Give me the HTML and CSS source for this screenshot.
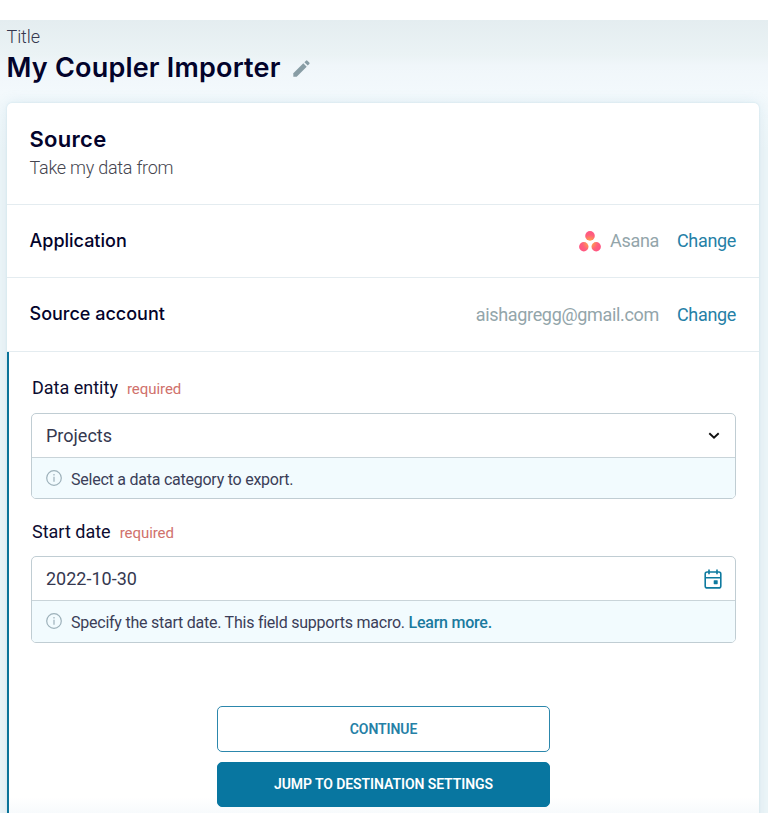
FILE: index.html
```html
<!DOCTYPE html>
<html lang="en">
<head>
    <meta charset="UTF-8">
    <meta name="viewport" content="width=device-width, initial-scale=1.0">
    <title>My Coupler Importer</title>
    <link rel="stylesheet" href="styles.css">
</head>
<body>
    <main class="page">
        <header class="page-header">
            <div class="page-label">Title</div>
            <div class="title-row">
                <h1>My Coupler Importer</h1>
                <svg class="icon-edit" width="17" height="17" viewBox="0 0 17 17">
                    <path d="M0.3 16.7V13.3L10.3 3.3L13.7 6.7L3.7 16.7Z"/>
                    <path d="M11.4 2.3L13 0.7Q13.7 0 14.4 0.7L16.3 2.6Q17 3.3 16.3 4L14.7 5.6Z"/>
                </svg>
            </div>
        </header>

        <section class="card">
            <div class="card-header">
                <h2>Source</h2>
                <p>Take my data from</p>
            </div>

            <div class="row">
                <h3>Application</h3>
                <div class="row-value">
                    <svg class="icon-asana" width="22" height="21" viewBox="0 0 22 21">
                        <defs>
                            <radialGradient id="asana" cx="11" cy="11.5" r="12" gradientUnits="userSpaceOnUse">
                                <stop offset="0" stop-color="#ffb047"/>
                                <stop offset="0.3" stop-color="#ff8f58"/>
                                <stop offset="0.65" stop-color="#ff5f7d"/>
                                <stop offset="1" stop-color="#ff5483"/>
                            </radialGradient>
                        </defs>
                        <g fill="url(#asana)">
                            <circle cx="11" cy="4.9" r="4.8"/>
                            <circle cx="4.8" cy="15.8" r="4.7"/>
                            <circle cx="17.2" cy="15.8" r="4.7"/>
                        </g>
                    </svg>
                    <span class="value">Asana</span>
                    <a class="change">Change</a>
                </div>
            </div>

            <div class="row">
                <h3>Source account</h3>
                <div class="row-value">
                    <span class="value">aishagregg@gmail.com</span>
                    <a class="change">Change</a>
                </div>
            </div>

            <div class="card-body">
                <div class="label">Data entity <em>required</em></div>
                <div class="field field-select">
                    <div class="control">
                        <span>Projects</span>
                        <svg class="icon-chevron" width="12" height="8" viewBox="0 0 12 8">
                            <path d="M1.3 1.3L6 5.8L10.7 1.3"/>
                        </svg>
                    </div>
                    <div class="hint">
                        <svg class="icon-info" width="16" height="16" viewBox="0 0 16 16">
                            <circle cx="8" cy="8" r="7.3"/>
                            <path d="M8 6.8V11.8M8 4V5.4"/>
                        </svg>
                        <span>Select a data category to export.</span>
                    </div>
                </div>

                <div class="label">Start date <em>required</em></div>
                <div class="field field-date">
                    <div class="control">
                        <span>2022-10-30</span>
                        <svg class="icon-calendar" width="18" height="20" viewBox="0 0 18 20">
                            <rect x="1.2" y="3" width="15.6" height="15.9" rx="2"/>
                            <path d="M1.2 8.8H16.8M5 0.6V5.2M13 0.6V5.2"/>
                            <rect class="dot" x="9.7" y="11.2" width="4" height="4" rx="0.6"/>
                        </svg>
                    </div>
                    <div class="hint">
                        <svg class="icon-info" width="16" height="16" viewBox="0 0 16 16">
                            <circle cx="8" cy="8" r="7.3"/>
                            <path d="M8 6.8V11.8M8 4V5.4"/>
                        </svg>
                        <span>Specify the start date. This field supports macro. <a>Learn more.</a></span>
                    </div>
                </div>

                <div class="actions">
                    <button class="btn btn-outline">Continue</button>
                    <button class="btn btn-primary">Jump to destination settings</button>
                </div>
            </div>
        </section>
    </main>
</body>
</html>
```
FILE: styles.css
```css
* {
    box-sizing: border-box;
}
body {
    margin: 0;
    height: 813px;
    overflow: hidden;
    font-family: Roboto, "Liberation Sans", sans-serif;
    font-size: 18px;
    color: #35384f;
    background: #fff;
}
h1, h2, h3, p {
    margin: 0;
    color: #03032b;
    font-family: Inter, "Liberation Sans", sans-serif;
}
.page {
    margin-top: 20px;
    height: 793px;
    padding: 0 9px 0 6.5px;
    background: linear-gradient(#e4edf0 0, #ebf3f5 36px, #f0f6fa 46px, #f3f9fc 72px, #edf5f8 130px, #edf5f8 100%);
}
.page-header {
    height: 82.5px;
    padding-top: 5px;
}
.page-label {
    line-height: 24px;
    font-weight: 300;
    letter-spacing: -0.1px;
}
.title-row {
    display: flex;
    align-items: center;
    height: 38px;
    gap: 12.5px;
}
h1 {
    font-size: 27px;
    line-height: 38px;
    font-weight: 600;
    letter-spacing: 0.2px;
    white-space: nowrap;
}
.icon-edit {
    fill: #889da5;
    margin-top: 1px;
}
.card {
    height: 740px;
    background: #fff;
    border-radius: 5px;
    box-shadow: 0 0 2px #c5dfe9, 0 0 14px rgba(140, 190, 210, 0.2);
}
.card-header {
    height: 102px;
    padding: 21px 23px 0;
    border-bottom: 1px solid #e4ecf0;
}
h2 {
    font-size: 22px;
    line-height: 30px;
    font-weight: 600;
    letter-spacing: 0.3px;
}
.card-header p {
    margin-top: 2px;
    font-family: Roboto, "Liberation Sans", sans-serif;
    font-weight: 300;
    line-height: 24px;
    letter-spacing: -0.25px;
    color: #45454f;
}
.row {
    display: flex;
    justify-content: space-between;
    align-items: center;
    height: 73.5px;
    padding: 0 23px;
    border-bottom: 1px solid #e4ecf0;
}
h3 {
    font-size: 18px;
    line-height: 24px;
    font-weight: 500;
}
.row-value {
    display: flex;
    align-items: center;
    line-height: 24px;
    letter-spacing: -0.33px;
    padding-top: 1px;
}
.icon-asana {
    margin-right: 9px;
}
.value {
    color: #93a5aa;
    margin-right: 18px;
}
.change {
    color: #2580a6;
}
.card-body {
    height: 491px;
    padding: 24px 23px 0 22.5px;
    border-left: 2px solid #0b7399;
    background: linear-gradient(#fff 445px, #f7fafc 462px);
}
.label {
    display: flex;
    align-items: baseline;
    gap: 9px;
    padding-left: 1px;
    line-height: 24px;
    color: #0c0c30;
}
.label em {
    font-style: normal;
    font-size: 15px;
    letter-spacing: -0.05px;
    color: #d0716c;
}
.field {
    border: 1px solid #c0cdd3;
    border-radius: 5px;
    overflow: hidden;
}
.field-select {
    height: 86px;
    margin: 12px 0 21px;
}
.field-date {
    height: 87px;
    margin-top: 11px;
}
.control {
    display: flex;
    align-items: center;
    justify-content: space-between;
    height: 44px;
    padding: 0 14px;
    border-bottom: 1px solid #c9d4d9;
}
.icon-chevron {
    margin: 1px 1px 0 0;
    fill: none;
    stroke: #111;
    stroke-width: 1.9;
}
.icon-calendar {
    margin: 2px -1px 0 0;
    fill: none;
    stroke: #0e7a9f;
    stroke-width: 1.6;
}
.icon-calendar .dot {
    fill: #0e7a9f;
    stroke: none;
}
.hint {
    display: flex;
    align-items: center;
    gap: 9px;
    height: 42px;
    padding: 1px 0 0 14px;
    font-size: 16px;
    letter-spacing: -0.24px;
    color: #3b3e58;
    background: #f2fbfe;
}
.hint a {
    color: #1b7a9e;
    font-weight: 500;
}
.icon-info {
    margin-top: -3px;
    fill: none;
    stroke: #9db1ba;
    stroke-width: 1.2;
}
.actions {
    display: flex;
    flex-direction: column;
    gap: 10px;
    width: 333px;
    margin: 63px auto 0 186px;
}
.btn {
    height: 46px;
    padding: 0;
    border: 1px solid #0876a0;
    border-radius: 5px;
    font-family: Roboto, "Liberation Sans", sans-serif;
    font-size: 14px;
    font-weight: 600;
    letter-spacing: -0.08px;
    text-transform: uppercase;
}
.btn-outline {
    border-color: #2c87ac;
    color: #2580a6;
    background: #fff;
}
.btn-primary {
    height: 45px;
    color: #fff;
    background: #0876a0;
}
```
